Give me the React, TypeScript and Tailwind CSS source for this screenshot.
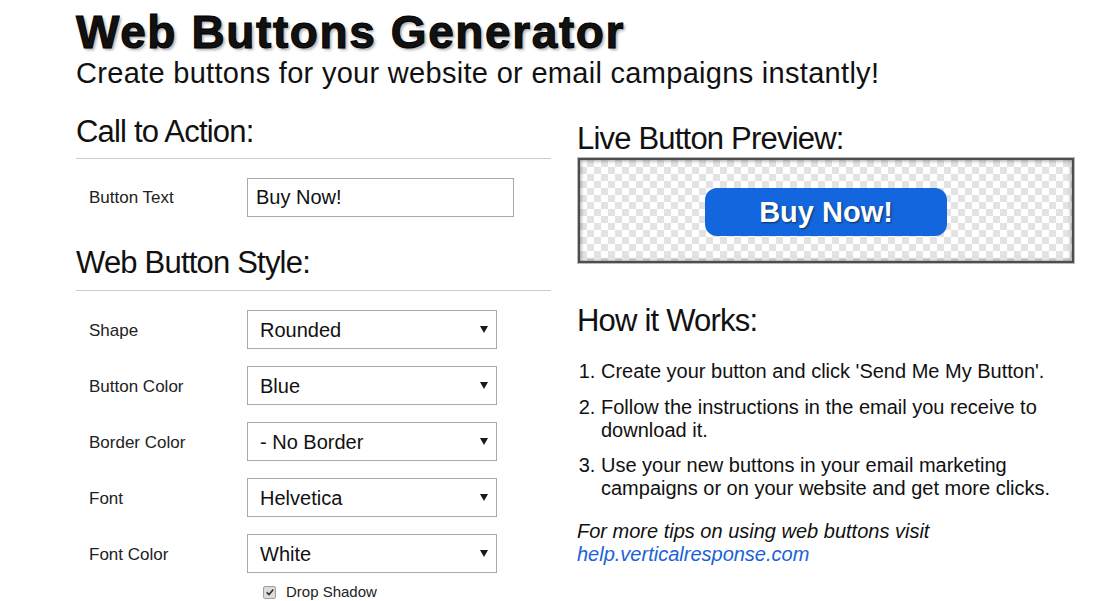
import { useState } from 'react';

const font = { fontFamily: '"Liberation Sans", Arial, Helvetica, sans-serif' };

const styleRows = [
    { label: 'Shape', value: 'Rounded', options: ['Rounded', 'Square', 'Pill'] },
    { label: 'Button Color', value: 'Blue', options: ['Blue', 'Green', 'Red', 'Orange'] },
    { label: 'Border Color', value: '- No Border', options: ['- No Border', 'Black', 'Gray'] },
    { label: 'Font', value: 'Helvetica', options: ['Helvetica', 'Arial', 'Georgia'] },
    { label: 'Font Color', value: 'White', options: ['White', 'Black'] },
];

function SelectBox({ value, options }: { value: string; options: string[] }) {
    return (
        <div className="relative w-[250px] h-[39px]">
            <select
                defaultValue={value}
                className="appearance-none w-full h-full border border-[#a9a9a9] bg-white pl-[12px] text-[20px] text-[#111] outline-none"
                style={font}
            >
                {options.map((o) => (
                    <option key={o}>{o}</option>
                ))}
            </select>
            {/* arrow overlay */}
            <svg viewBox="0 0 8 7" className="pointer-events-none absolute right-[9px] top-[16px] w-[8px] h-[7px]">
                <path d="M0 0 H8 L4 7 Z" fill="#1a1a1a" />
            </svg>
        </div>
    );
}

export default function App() {
    const [text, setText] = useState('Buy Now!');
    const [shadow, setShadow] = useState(true);

    return (
        <div className="min-h-screen bg-white text-[#111]" style={font}>
            <div className="ml-[76px] w-[1000px] pt-[9px]">
                <h1 className="text-[46px] leading-[46px] font-bold tracking-[1.6px] [-webkit-text-stroke:1px_#000] [text-shadow:2px_2px_3px_rgba(0,0,0,0.35)]">
                    Web Buttons Generator
                </h1>
                <p className="mt-[4px] text-[29px] leading-[28px] tracking-[0.3px]">
                    Create buttons for your website or email campaigns instantly!
                </p>

                <div className="flex gap-[26px]">
                    {/* Left column */}
                    <div className="w-[475px]">
                        <h2 className="mt-[29px] text-[31px] leading-[31px] tracking-[-0.8px]">Call to Action:</h2>
                        <div className="mt-[11px] h-px bg-[#cccccc]" />
                        <div className="mt-[19px] flex items-center h-[39px]">
                            <span className="w-[171px] pl-[13px] text-[17px] text-[#222]">Button Text</span>
                            <input
                                value={text}
                                onChange={(e) => setText(e.target.value)}
                                className="w-[267px] h-[39px] border border-[#a9a9a9] px-[8px] text-[20px] text-[#111] outline-none"
                                style={font}
                            />
                        </div>

                        <h2 className="mt-[30px] text-[31px] leading-[31px] tracking-[-0.8px]">Web Button Style:</h2>
                        <div className="mt-[12px] h-px bg-[#cccccc]" />
                        <div className="mt-[19px] flex flex-col gap-[17px]">
                            {styleRows.map((r) => (
                                <div key={r.label} className="flex items-center h-[39px]">
                                    <span className="w-[171px] pl-[13px] pt-[2px] text-[17px] text-[#222]">{r.label}</span>
                                    <SelectBox value={r.value} options={r.options} />
                                </div>
                            ))}
                        </div>
                        <label className="mt-[8px] ml-[187px] flex items-center gap-[10px] text-[15px] text-[#222] cursor-pointer">
                            <span
                                onClick={() => setShadow(!shadow)}
                                className="w-[13px] h-[13px] rounded-[2px] border border-[#a0a0a0] bg-[#dcdcdc] flex items-center justify-center"
                            >
                                {shadow && (
                                    <svg viewBox="0 0 12 12" className="w-[10px] h-[10px]">
                                        <path d="M2 6.5 L4.8 9 L10 3" fill="none" stroke="#333" strokeWidth="2" />
                                    </svg>
                                )}
                            </span>
                            Drop Shadow
                        </label>
                    </div>

                    {/* Right column */}
                    <div className="w-[498px]">
                        <h2 className="mt-[36px] text-[31px] leading-[31px] tracking-[-0.8px]">Live Button Preview:</h2>
                        <div className="mt-[3px] h-[107px] border border-[#bbbbbb]">
                            <div className="h-full border-2 border-[#4d4d4d] shadow-[inset_0_0_4px_rgba(0,0,0,0.55)] bg-[conic-gradient(#e3e3e3_25%,#ffffff_0_50%,#e3e3e3_0_75%,#ffffff_0)] bg-[length:14px_14px] flex items-center justify-center">
                                <div className="mt-[2px] w-[242px] h-[48px] rounded-[12px] bg-[#1366dd] flex items-center justify-center">
                                    <span
                                        className={`pt-[2px] text-white text-[29px] font-bold leading-none ${shadow ? '[text-shadow:1px_1px_2px_rgba(0,0,0,0.55)]' : ''}`}
                                    >
                                        {text}
                                    </span>
                                </div>
                            </div>
                        </div>

                        <h2 className="mt-[41px] text-[31px] leading-[31px] tracking-[-0.8px]">How it Works:</h2>
                        <ol className="mt-[24px] list-decimal pl-[24px] text-[20px] leading-[23px] text-[#111] flex flex-col gap-[12.5px]">
                            <li>Create your button and click 'Send Me My Button'.</li>
                            <li>Follow the instructions in the email you receive to download it.</li>
                            <li>Use your new buttons in your email marketing campaigns or on your website and get more clicks.</li>
                        </ol>
                        <p className="mt-[20px] text-[20px] leading-[23px] italic">
                            For more tips on using web buttons visit
                            <br />
                            <a href="#" className="text-[#1a62d8]">help.verticalresponse.com</a>
                        </p>
                    </div>
                </div>
            </div>
        </div>
    );
}
